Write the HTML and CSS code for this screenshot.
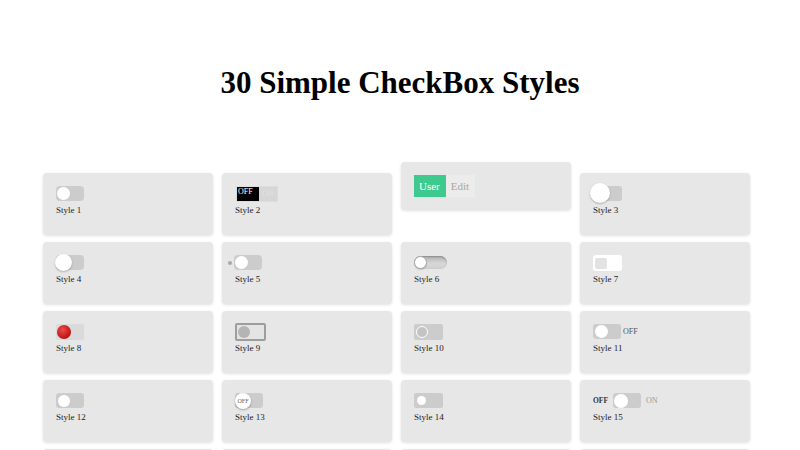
FILE: index.html
```html
<!DOCTYPE html>
<html lang="en">

<head>
    <meta charset="UTF-8">
    <meta name="viewport" content="width=device-width, initial-scale=1.0">
    <title>30 Simple CheckBox Styles</title>
    <link rel="stylesheet" href="styles.css">
</head>

<body>
    <h1 class="title">30 Simple CheckBox Styles</h1>

    <div class="styles">
        <div class="card">
            <label class="sw"><input type="checkbox"><span class="track s1"></span></label>
            <div class="name">Style 1</div>
        </div>
        <div class="card">
            <label class="sw"><input type="checkbox"><span class="s2"><span class="off">OFF</span><span class="on">ON</span></span></label>
            <div class="name">Style 2</div>
        </div>
        <div class="card tabs">
            <div class="seg">
                <span class="seg-item active">User</span>
                <span class="seg-item">Edit</span>
            </div>
        </div>
        <div class="card">
            <label class="sw"><input type="checkbox"><span class="track s3"></span></label>
            <div class="name">Style 3</div>
        </div>

        <div class="card">
            <label class="sw"><input type="checkbox"><span class="track s4"></span></label>
            <div class="name">Style 4</div>
        </div>
        <div class="card">
            <label class="sw"><input type="checkbox"><span class="dot"></span><span class="track s5"></span></label>
            <div class="name">Style 5</div>
        </div>
        <div class="card">
            <label class="sw"><input type="checkbox"><span class="track s6"></span></label>
            <div class="name">Style 6</div>
        </div>
        <div class="card">
            <label class="sw"><input type="checkbox"><span class="track s7"></span></label>
            <div class="name">Style 7</div>
        </div>

        <div class="card">
            <label class="sw"><input type="checkbox"><span class="track s8"></span></label>
            <div class="name">Style 8</div>
        </div>
        <div class="card">
            <label class="sw"><input type="checkbox"><span class="track s9"></span></label>
            <div class="name">Style 9</div>
        </div>
        <div class="card">
            <label class="sw"><input type="checkbox"><span class="track s10"></span></label>
            <div class="name">Style 10</div>
        </div>
        <div class="card">
            <label class="sw"><input type="checkbox"><span class="track s11"></span><span class="state">OFF</span></label>
            <div class="name">Style 11</div>
        </div>

        <div class="card">
            <label class="sw"><input type="checkbox"><span class="track s12"></span></label>
            <div class="name">Style 12</div>
        </div>
        <div class="card">
            <label class="sw"><input type="checkbox"><span class="track s13"><span class="knob-text">OFF</span></span></label>
            <div class="name">Style 13</div>
        </div>
        <div class="card">
            <label class="sw"><input type="checkbox"><span class="track s14"></span></label>
            <div class="name">Style 14</div>
        </div>
        <div class="card">
            <label class="sw"><span class="side strong">OFF</span><input type="checkbox"><span class="track s15"></span><span class="side">ON</span></label>
            <div class="name">Style 15</div>
        </div>

        <div class="card">
            <label class="sw"><input type="checkbox"><span class="track s1"></span></label>
            <div class="name">Style 16</div>
        </div>
        <div class="card">
            <label class="sw"><input type="checkbox"><span class="track s4"></span></label>
            <div class="name">Style 17</div>
        </div>
        <div class="card">
            <label class="sw"><input type="checkbox"><span class="track s12"></span></label>
            <div class="name">Style 18</div>
        </div>
        <div class="card">
            <label class="sw"><input type="checkbox"><span class="track s14"></span></label>
            <div class="name">Style 19</div>
        </div>
    </div>
</body>

</html>
```

FILE: styles.css
```css
body {
    margin: 0;
    background: #fff;
    font-family: "Liberation Serif", "Times New Roman", serif;
    color: #222;
}

.title {
    margin: 0;
    padding: 65px 0 57px;
    font-size: 31px;
    text-align: center;
    color: #000;
}

/* cards sit inline so they line up on the label baseline */
.styles {
    padding-left: 43px;
    font-size: 0;
}

.card {
    display: inline-block;
    vertical-align: baseline;
    box-sizing: border-box;
    width: 170px;
    height: 62px;
    margin: 4px 9px 3px 0;
    padding: 13px;
    background: #e7e7e7;
    border-radius: 4px;
    box-shadow: 0 1px 3px rgba(0, 0, 0, 0.12);
    font-size: 9px;
}

.card.tabs {
    height: 48px;
    overflow: hidden;
}

.name {
    margin-top: 4px;
    line-height: 11px;
    color: #222;
}

.sw {
    display: flex;
    align-items: center;
    height: 15px;
    cursor: pointer;
}

.sw input {
    display: none;
}

.track {
    position: relative;
    display: block;
    flex: none;
    width: 28px;
    height: 15px;
    background: #cccccc;
    border-radius: 3px;
}

.track::after {
    content: "";
    position: absolute;
    background: #fff;
    border-radius: 50%;
}

/* style 1 */
.s1 {
    border-radius: 4px;
}

.s1::after {
    left: 1px;
    top: 1px;
    width: 13px;
    height: 13px;
}

/* style 2 */
.s2 {
    display: flex;
    margin-left: 1px;
    border: 1px solid #dcdcdc;
    font-size: 8px;
    line-height: 9px;
}

.s2 .off {
    width: 21px;
    height: 14px;
    padding-left: 1px;
    background: #000;
    color: #fff;
}

.s2 .on {
    width: 18px;
    height: 14px;
    background: #d6d6d6;
    color: #e2e2e2;
    text-align: center;
    line-height: 14px;
}

/* style 3 */
.s3 {
    width: 22px;
    margin-left: 7px;
}

.s3::after {
    left: -10px;
    top: -3px;
    width: 20px;
    height: 20px;
    box-shadow: 0 1px 2px rgba(0, 0, 0, 0.25);
}

/* style 4 */
.s4 {
    border-radius: 4px;
}

.s4::after {
    left: -1px;
    top: -1px;
    width: 17px;
    height: 17px;
    box-shadow: 0 1px 2px rgba(0, 0, 0, 0.25);
}

/* style 5 */
.dot {
    width: 4px;
    height: 4px;
    margin: 0 2px 0 -7px;
    border-radius: 50%;
    background: #a8a8a8;
}

.s5 {
    border-radius: 4px;
}

.s5::after {
    left: 1px;
    top: 1px;
    width: 13px;
    height: 13px;
}

/* style 6 */
.s6 {
    width: 33px;
    height: 13px;
    border-radius: 7px;
    background: linear-gradient(#b4b4b4, #d8d8d8 60%, #cfcfcf);
    box-shadow: inset 0 1px 2px rgba(0, 0, 0, 0.25);
}

.s6::after {
    left: 0;
    top: 0;
    width: 11px;
    height: 11px;
    border: 1px solid #a9a9a9;
    box-shadow: 0 1px 1px rgba(0, 0, 0, 0.15);
}

/* style 7 */
.s7 {
    width: 29px;
    height: 16px;
    background: #fff;
    border-radius: 3px;
}

.s7::after {
    left: 2px;
    top: 3px;
    width: 12px;
    height: 11px;
    border-radius: 2px;
    background: #e2e2e2;
}

/* style 8 */
.s8 {
    height: 16px;
    background: #dadada;
    border-radius: 2px;
}

.s8::after {
    left: 1px;
    top: 1px;
    width: 14px;
    height: 14px;
    background: radial-gradient(circle at 40% 35%, #ef4a4a, #c81e1e 55%, #8c0d0d);
}

/* style 9 */
.s9 {
    box-sizing: border-box;
    width: 31px;
    height: 18px;
    background: #e4e4e4;
    border: 2px solid #9d9d9d;
    border-radius: 2px;
}

.s9::after {
    left: 1px;
    top: 1px;
    width: 12px;
    height: 12px;
    background: #b4b4b4;
}

/* style 10 */
.s10 {
    width: 29px;
    height: 16px;
    border-radius: 2px;
}

.s10::after {
    left: 2px;
    top: 2px;
    width: 10px;
    height: 10px;
    background: #c3c3c3;
    border: 1.5px solid #fff;
}

/* style 11 */
.s11::after {
    left: 2px;
    top: 1px;
    width: 13px;
    height: 13px;
}

.state {
    margin-left: 2px;
    font-size: 8px;
    color: #555;
}

/* style 12 */
.s12::after {
    left: 2px;
    top: 2px;
    width: 12px;
    height: 12px;
}

/* style 13 */
.s13 .knob-text {
    position: absolute;
    z-index: 1;
    left: 0;
    top: 0;
    width: 16px;
    height: 16px;
    border-radius: 50%;
    background: #fff;
    box-shadow: 0 1px 2px rgba(0, 0, 0, 0.3);
    font-size: 6px;
    line-height: 16px;
    text-align: center;
    color: #666;
}

.s13::after {
    display: none;
}

/* style 14 */
.s14 {
    width: 29px;
    border-radius: 2px;
}

.s14::after {
    left: 3px;
    top: 3px;
    width: 9px;
    height: 9px;
}

/* style 15 */
.side {
    margin-left: 5px;
    font-size: 8px;
    color: #9a9a9a;
}

.side.strong {
    margin: 0 5px 0 0;
    font-size: 7.5px;
    font-weight: bold;
    color: #333;
}

.s15::after {
    left: 1px;
    top: 1px;
    width: 14px;
    height: 14px;
}

/* segmented control */
.seg {
    display: flex;
    font-size: 11px;
}

.seg-item {
    height: 22px;
    padding: 0 6px 0 5px;
    line-height: 22px;
    background: #ececec;
    color: #a6a6a6;
}

.seg-item.active {
    background: #3ec98f;
    color: #fff;
}
```
